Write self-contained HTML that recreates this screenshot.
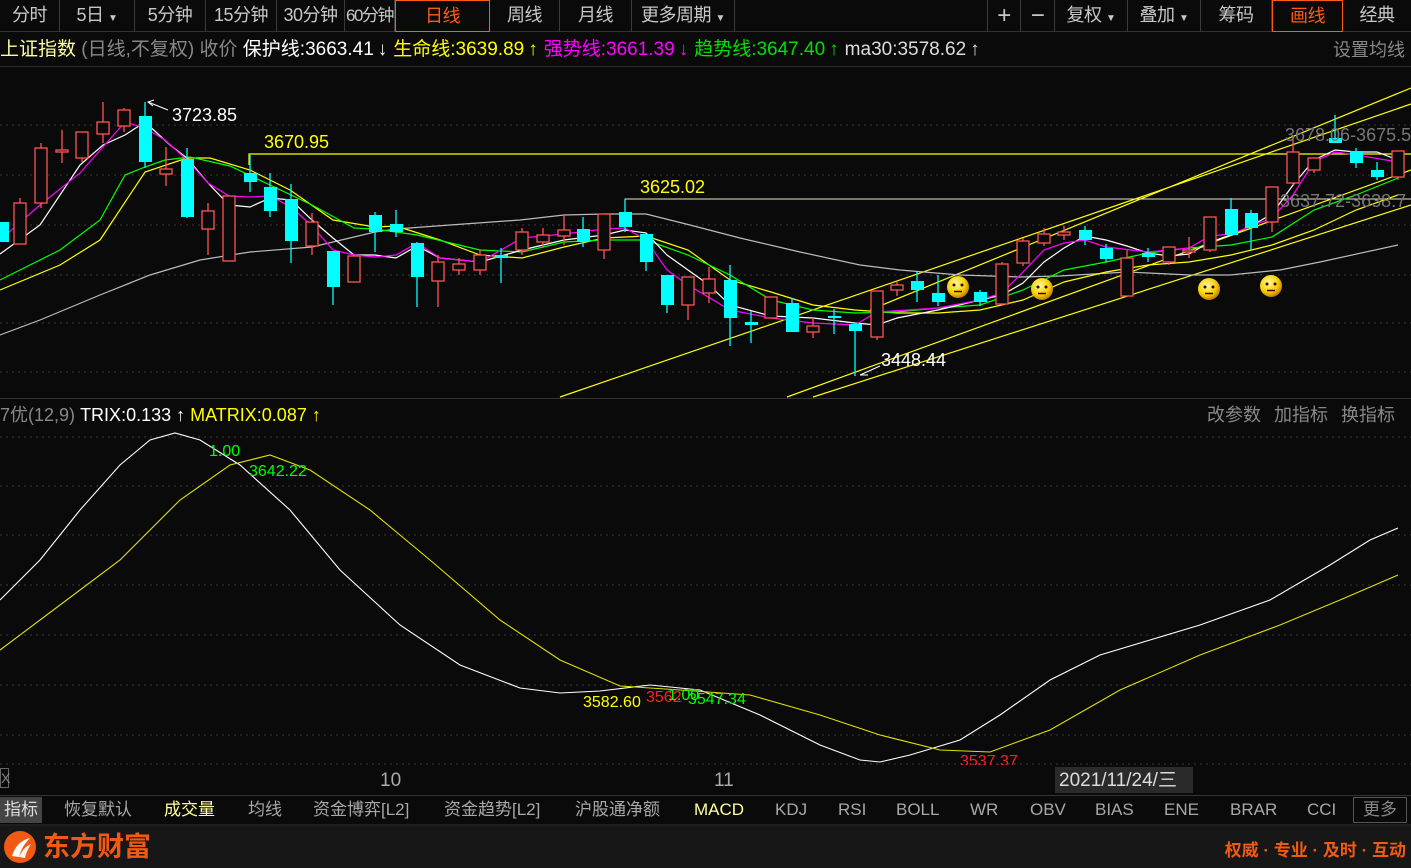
<!DOCTYPE html>
<html><head><meta charset="utf-8"><style>
*{margin:0;padding:0;box-sizing:border-box}
body{width:1411px;height:868px;background:#0a0a0a;overflow:hidden;font-family:"Liberation Sans","Noto Sans CJK SC",sans-serif;color:#aaa;position:relative}
.top{position:absolute;top:0;left:0;width:1411px;height:32px;border-bottom:1px solid #333}
.tb{position:absolute;top:0;height:32px;line-height:31px;font-size:18px;color:#c8c8c8;text-align:center;border-right:1px solid #3a3a3a;white-space:nowrap;overflow:hidden;letter-spacing:-0.5px}
.tb.on{color:#ff5a14;border:1px solid #ff5a14}
.info{position:absolute;top:33px;left:0;width:1411px;height:34px;line-height:34px;font-size:19px;white-space:nowrap;border-bottom:1px solid #2a2a2a}
.info i{font-style:normal;margin:0 6px 0 4px}
.tabs{position:absolute;top:795px;left:0;width:1411px;height:29px;border-top:1px solid #333;line-height:28px;font-size:17px}
.tabs span{position:absolute;top:0;color:#a8a8a8}
.foot{position:absolute;top:826px;left:0;width:1411px;height:42px;background:#171717}
</style></head><body>
<div class="top">
<div class="tb" style="left:0;width:60px">分时</div>
<div class="tb" style="left:60px;width:75px">5日 <span style="font-size:10px">▼</span></div>
<div class="tb" style="left:135px;width:71px">5分钟</div>
<div class="tb" style="left:206px;width:71px">15分钟</div>
<div class="tb" style="left:277px;width:68px">30分钟</div>
<div class="tb" style="left:345px;width:50px;letter-spacing:-1.5px;font-size:17px">60分钟</div>
<div class="tb on" style="left:395px;width:95px">日线</div>
<div class="tb" style="left:490px;width:70px">周线</div>
<div class="tb" style="left:560px;width:72px">月线</div>
<div class="tb" style="left:632px;width:103px">更多周期 <span style="font-size:10px">▼</span></div>
<div class="tb" style="left:987px;width:34px;border-left:1px solid #3a3a3a;font-size:24px">+</div>
<div class="tb" style="left:1021px;width:34px;font-size:24px">−</div>
<div class="tb" style="left:1055px;width:73px">复权 <span style="font-size:10px">▼</span></div>
<div class="tb" style="left:1128px;width:73px">叠加 <span style="font-size:10px">▼</span></div>
<div class="tb" style="left:1201px;width:71px">筹码</div>
<div class="tb on" style="left:1272px;width:71px">画线</div>
<div class="tb" style="left:1343px;width:68px;border-right:none">经典</div>
</div>
<div class="info"><span style="color:#ffffa0">上证指数</span> <span style="color:#888">(日线,不复权) 收价</span> <span style="color:#fff">保护线:3663.41<i>↓</i></span><span style="color:#ffff00">生命线:3639.89<i>↑</i></span><span style="color:#ff00ff">强势线:3661.39<i>↓</i></span><span style="color:#00e000">趋势线:3647.40<i>↑</i></span><span style="color:#ddd">ma30:3578.62<i>↑</i></span><span style="position:absolute;right:6px;color:#888;font-size:18px">设置均线</span></div>

<svg style="position:absolute;left:0;top:0" width="1411" height="868">
<g stroke="#3a3a3a" stroke-dasharray="2,4" stroke-width="1">
<line x1="0" y1="125" x2="1411" y2="125"/><line x1="0" y1="175" x2="1411" y2="175"/><line x1="0" y1="225" x2="1411" y2="225"/><line x1="0" y1="275" x2="1411" y2="275"/><line x1="0" y1="323" x2="1411" y2="323"/><line x1="0" y1="372" x2="1411" y2="372"/>
<line x1="0" y1="437" x2="1411" y2="437"/><line x1="0" y1="486" x2="1411" y2="486"/><line x1="0" y1="535" x2="1411" y2="535"/><line x1="0" y1="585" x2="1411" y2="585"/><line x1="0" y1="635" x2="1411" y2="635"/><line x1="0" y1="685" x2="1411" y2="685"/><line x1="0" y1="735" x2="1411" y2="735"/><line x1="0" y1="764" x2="1411" y2="764"/>
</g>
<line x1="0" y1="398.5" x2="1411" y2="398.5" stroke="#333"/>
<line x1="0" y1="793.5" x2="1411" y2="793.5" stroke="#333"/>
<g stroke="#ffff00" stroke-width="1.2" fill="none">
<line x1="560" y1="397" x2="1411" y2="104"/>
<line x1="870" y1="310" x2="1411" y2="88"/>
<line x1="787" y1="397" x2="1411" y2="170"/>
<line x1="813" y1="397" x2="1411" y2="205"/>
<polyline points="249,165 249,154 1411,154"/>
</g>
<polyline points="625,212 625,199 1411,199" stroke="#e8e8c0" fill="none"/>
<polyline fill="none" stroke="#bbb" stroke-width="1.2" points="0,335 40,320 100,295 150,275 200,260 250,252 312,247 375,232 396,229 450,225 520,220 564,215 604,214 646,214 690,225 740,238 800,252 860,265 900,270 960,275 1020,277 1060,276 1127,272 1190,275 1230,275 1280,270 1320,262 1398,245"/>
<polyline fill="none" stroke="#ffff00" stroke-width="1.2" points="0,290 60,265 100,240 145,172 187,158 210,158 250,170 290,190 333,220 375,227 396,226 440,240 480,255 522,258 564,247 604,238 646,236 688,250 730,280 771,292 813,305 855,310 897,313 938,313 980,310 1023,300 1064,282 1106,272 1148,265 1189,262 1231,255 1272,245 1314,230 1356,210 1398,195"/>
<polyline fill="none" stroke="#00ff00" stroke-width="1.2" points="0,280 60,250 100,220 125,175 145,167 165,160 190,157 230,166 270,185 312,205 354,228 375,229 417,235 480,250 522,252 564,242 604,240 646,240 688,255 730,275 771,300 813,310 855,313 897,312 938,308 980,305 1023,290 1064,270 1106,262 1148,253 1189,248 1231,245 1272,237 1314,210 1356,195 1398,178"/>
<polyline fill="none" stroke="#fff" stroke-width="1.2" points="0,254 40,225 80,165 103,145 125,135 145,122 170,145 187,158 208,183 229,205 250,207 270,198 291,200 312,220 333,238 354,255 375,255 396,258 417,246 440,258 480,262 522,250 564,240 604,235 625,230 646,233 667,255 688,270 709,285 730,305 771,316 813,318 855,323 877,325 897,318 938,310 980,300 1002,295 1023,283 1044,262 1064,248 1085,236 1106,240 1127,246 1148,253 1169,256 1189,254 1210,242 1231,235 1251,226 1272,214 1293,185 1314,160 1335,150 1356,152 1377,152 1398,160"/>
<polyline fill="none" stroke="#ff00ff" stroke-width="1.2" points="0,240 40,205 80,173 103,147 125,122 145,128 165,140 187,160 208,183 229,196 250,197 270,196 291,207 312,226 333,250 354,255 375,257 396,255 417,243 440,258 480,262 522,238 564,234 604,229 625,228 646,240 667,270 688,285 730,310 771,318 813,323 855,325 877,312 938,308 980,300 1002,293 1023,272 1044,250 1064,243 1085,240 1106,247 1148,252 1189,248 1210,236 1231,234 1272,218 1293,195 1314,162 1335,152 1356,155 1398,162"/>
<g stroke-width="1.3">
<line x1="3" y1="222" x2="3" y2="242" stroke="#0ff"/><rect x="-3" y="222" width="12" height="20" fill="#0ff"/>
<line x1="20" y1="198" x2="20" y2="244" stroke="#f55"/><rect x="14" y="203" width="12" height="41" fill="#0a0a0a" stroke="#f55"/>
<line x1="41" y1="143" x2="41" y2="208" stroke="#f55"/><rect x="35" y="148" width="12" height="55" fill="#0a0a0a" stroke="#f55"/>
<line x1="62" y1="130" x2="62" y2="163" stroke="#f55"/><rect x="56" y="150" width="12" height="2" fill="#0a0a0a" stroke="#f55"/>
<line x1="82" y1="132" x2="82" y2="162" stroke="#f55"/><rect x="76" y="132" width="12" height="26" fill="#0a0a0a" stroke="#f55"/>
<line x1="103" y1="102" x2="103" y2="143" stroke="#f55"/><rect x="97" y="122" width="12" height="12" fill="#0a0a0a" stroke="#f55"/>
<line x1="124" y1="108" x2="124" y2="132" stroke="#f55"/><rect x="118" y="110" width="12" height="16" fill="#0a0a0a" stroke="#f55"/>
<line x1="145" y1="102" x2="145" y2="168" stroke="#0ff"/><rect x="139" y="116" width="13" height="46" fill="#0ff"/>
<line x1="166" y1="147" x2="166" y2="186" stroke="#f55"/><rect x="160" y="169" width="12" height="5" fill="#0a0a0a" stroke="#f55"/>
<line x1="187" y1="148" x2="187" y2="218" stroke="#0ff"/><rect x="181" y="159" width="13" height="58" fill="#0ff"/>
<line x1="208" y1="203" x2="208" y2="255" stroke="#f55"/><rect x="202" y="211" width="12" height="18" fill="#0a0a0a" stroke="#f55"/>
<line x1="229" y1="196" x2="229" y2="261" stroke="#f55"/><rect x="223" y="196" width="12" height="65" fill="#0a0a0a" stroke="#f55"/>
<line x1="250" y1="155" x2="250" y2="192" stroke="#0ff"/><rect x="244" y="173" width="13" height="9" fill="#0ff"/>
<line x1="270" y1="173" x2="270" y2="217" stroke="#0ff"/><rect x="264" y="187" width="13" height="24" fill="#0ff"/>
<line x1="291" y1="184" x2="291" y2="263" stroke="#0ff"/><rect x="285" y="199" width="13" height="42" fill="#0ff"/>
<line x1="312" y1="213" x2="312" y2="255" stroke="#f55"/><rect x="306" y="222" width="12" height="24" fill="#0a0a0a" stroke="#f55"/>
<line x1="333" y1="251" x2="333" y2="305" stroke="#0ff"/><rect x="327" y="251" width="13" height="36" fill="#0ff"/>
<line x1="354" y1="256" x2="354" y2="282" stroke="#f55"/><rect x="348" y="256" width="12" height="26" fill="#0a0a0a" stroke="#f55"/>
<line x1="375" y1="212" x2="375" y2="252" stroke="#0ff"/><rect x="369" y="215" width="13" height="17" fill="#0ff"/>
<line x1="396" y1="210" x2="396" y2="237" stroke="#0ff"/><rect x="390" y="224" width="13" height="8" fill="#0ff"/>
<line x1="417" y1="242" x2="417" y2="307" stroke="#0ff"/><rect x="411" y="243" width="13" height="34" fill="#0ff"/>
<line x1="438" y1="255" x2="438" y2="307" stroke="#f55"/><rect x="432" y="262" width="12" height="19" fill="#0a0a0a" stroke="#f55"/>
<line x1="459" y1="258" x2="459" y2="275" stroke="#f55"/><rect x="453" y="264" width="12" height="6" fill="#0a0a0a" stroke="#f55"/>
<line x1="480" y1="250" x2="480" y2="275" stroke="#f55"/><rect x="474" y="255" width="12" height="15" fill="#0a0a0a" stroke="#f55"/>
<line x1="501" y1="248" x2="501" y2="283" stroke="#0ff"/><rect x="495" y="255" width="13" height="3" fill="#0ff"/>
<line x1="522" y1="228" x2="522" y2="255" stroke="#f55"/><rect x="516" y="232" width="12" height="18" fill="#0a0a0a" stroke="#f55"/>
<line x1="543" y1="228" x2="543" y2="248" stroke="#f55"/><rect x="537" y="235" width="12" height="7" fill="#0a0a0a" stroke="#f55"/>
<line x1="564" y1="215" x2="564" y2="245" stroke="#f55"/><rect x="558" y="230" width="12" height="6" fill="#0a0a0a" stroke="#f55"/>
<line x1="583" y1="217" x2="583" y2="247" stroke="#0ff"/><rect x="577" y="229" width="13" height="13" fill="#0ff"/>
<line x1="604" y1="214" x2="604" y2="259" stroke="#f55"/><rect x="598" y="214" width="12" height="36" fill="#0a0a0a" stroke="#f55"/>
<line x1="625" y1="199" x2="625" y2="232" stroke="#0ff"/><rect x="619" y="212" width="13" height="15" fill="#0ff"/>
<line x1="646" y1="234" x2="646" y2="271" stroke="#0ff"/><rect x="640" y="234" width="13" height="28" fill="#0ff"/>
<line x1="667" y1="275" x2="667" y2="313" stroke="#0ff"/><rect x="661" y="275" width="13" height="30" fill="#0ff"/>
<line x1="688" y1="277" x2="688" y2="320" stroke="#f55"/><rect x="682" y="277" width="12" height="28" fill="#0a0a0a" stroke="#f55"/>
<line x1="709" y1="267" x2="709" y2="303" stroke="#f55"/><rect x="703" y="279" width="12" height="14" fill="#0a0a0a" stroke="#f55"/>
<line x1="730" y1="265" x2="730" y2="346" stroke="#0ff"/><rect x="724" y="280" width="13" height="38" fill="#0ff"/>
<line x1="751" y1="311" x2="751" y2="343" stroke="#0ff"/><rect x="745" y="322" width="13" height="3" fill="#0ff"/>
<line x1="771" y1="297" x2="771" y2="318" stroke="#f55"/><rect x="765" y="297" width="12" height="21" fill="#0a0a0a" stroke="#f55"/>
<line x1="792" y1="298" x2="792" y2="332" stroke="#0ff"/><rect x="786" y="303" width="13" height="29" fill="#0ff"/>
<line x1="813" y1="317" x2="813" y2="338" stroke="#f55"/><rect x="807" y="326" width="12" height="6" fill="#0a0a0a" stroke="#f55"/>
<line x1="834" y1="309" x2="834" y2="334" stroke="#0ff"/><rect x="828" y="316" width="13" height="2" fill="#0ff"/>
<line x1="855" y1="324" x2="855" y2="376" stroke="#0ff"/><rect x="849" y="324" width="13" height="7" fill="#0ff"/>
<line x1="877" y1="291" x2="877" y2="340" stroke="#f55"/><rect x="871" y="291" width="12" height="46" fill="#0a0a0a" stroke="#f55"/>
<line x1="897" y1="282" x2="897" y2="296" stroke="#f55"/><rect x="891" y="285" width="12" height="5" fill="#0a0a0a" stroke="#f55"/>
<line x1="917" y1="272" x2="917" y2="302" stroke="#0ff"/><rect x="911" y="281" width="13" height="9" fill="#0ff"/>
<line x1="938" y1="275" x2="938" y2="306" stroke="#0ff"/><rect x="932" y="293" width="13" height="9" fill="#0ff"/>
<line x1="980" y1="290" x2="980" y2="306" stroke="#0ff"/><rect x="974" y="292" width="13" height="10" fill="#0ff"/>
<line x1="1002" y1="262" x2="1002" y2="306" stroke="#f55"/><rect x="996" y="264" width="12" height="40" fill="#0a0a0a" stroke="#f55"/>
<line x1="1023" y1="238" x2="1023" y2="266" stroke="#f55"/><rect x="1017" y="241" width="12" height="22" fill="#0a0a0a" stroke="#f55"/>
<line x1="1044" y1="228" x2="1044" y2="246" stroke="#f55"/><rect x="1038" y="234" width="12" height="9" fill="#0a0a0a" stroke="#f55"/>
<line x1="1064" y1="226" x2="1064" y2="240" stroke="#f55"/><rect x="1058" y="232" width="12" height="3" fill="#0a0a0a" stroke="#f55"/>
<line x1="1085" y1="226" x2="1085" y2="245" stroke="#0ff"/><rect x="1079" y="230" width="13" height="10" fill="#0ff"/>
<line x1="1106" y1="244" x2="1106" y2="262" stroke="#0ff"/><rect x="1100" y="248" width="13" height="11" fill="#0ff"/>
<line x1="1127" y1="250" x2="1127" y2="296" stroke="#f55"/><rect x="1121" y="258" width="12" height="38" fill="#0a0a0a" stroke="#f55"/>
<line x1="1148" y1="248" x2="1148" y2="262" stroke="#0ff"/><rect x="1142" y="253" width="13" height="4" fill="#0ff"/>
<line x1="1169" y1="247" x2="1169" y2="265" stroke="#f55"/><rect x="1163" y="247" width="12" height="15" fill="#0a0a0a" stroke="#f55"/>
<line x1="1189" y1="237" x2="1189" y2="258" stroke="#f55"/><rect x="1183" y="250" width="12" height="2" fill="#0a0a0a" stroke="#f55"/>
<line x1="1210" y1="217" x2="1210" y2="252" stroke="#f55"/><rect x="1204" y="217" width="12" height="33" fill="#0a0a0a" stroke="#f55"/>
<line x1="1231" y1="198" x2="1231" y2="235" stroke="#0ff"/><rect x="1225" y="209" width="13" height="26" fill="#0ff"/>
<line x1="1251" y1="210" x2="1251" y2="250" stroke="#0ff"/><rect x="1245" y="213" width="13" height="15" fill="#0ff"/>
<line x1="1272" y1="187" x2="1272" y2="232" stroke="#f55"/><rect x="1266" y="187" width="12" height="35" fill="#0a0a0a" stroke="#f55"/>
<line x1="1293" y1="140" x2="1293" y2="185" stroke="#f55"/><rect x="1287" y="152" width="12" height="31" fill="#0a0a0a" stroke="#f55"/>
<line x1="1314" y1="158" x2="1314" y2="173" stroke="#f55"/><rect x="1308" y="158" width="12" height="12" fill="#0a0a0a" stroke="#f55"/>
<line x1="1335" y1="115" x2="1335" y2="143" stroke="#0ff"/><rect x="1329" y="138" width="13" height="5" fill="#0ff"/>
<line x1="1356" y1="148" x2="1356" y2="168" stroke="#0ff"/><rect x="1350" y="151" width="13" height="12" fill="#0ff"/>
<line x1="1377" y1="162" x2="1377" y2="180" stroke="#0ff"/><rect x="1371" y="170" width="13" height="7" fill="#0ff"/>
<line x1="1398" y1="151" x2="1398" y2="180" stroke="#f55"/><rect x="1392" y="151" width="12" height="26" fill="#0a0a0a" stroke="#f55"/>
</g>
<defs><radialGradient id="sg" cx="0.4" cy="0.35" r="0.7"><stop offset="0" stop-color="#fff8a0"/><stop offset="0.6" stop-color="#f5d000"/><stop offset="1" stop-color="#c07000"/></radialGradient>
<g id="sm"><circle r="11" fill="url(#sg)"/><circle cx="-4" cy="-2" r="1.5" fill="#400"/><circle cx="4" cy="-2" r="1.5" fill="#400"/><line x1="-4" y1="4.5" x2="4" y2="4.5" stroke="#400" stroke-width="1.5"/></g></defs>
<use href="#sm" x="958" y="287"/><use href="#sm" x="1042" y="289"/><use href="#sm" x="1209" y="289"/><use href="#sm" x="1271" y="286"/>
<line x1="148" y1="102" x2="168" y2="110" stroke="#fff"/><polyline points="154,100 148,102 153,106" fill="none" stroke="#fff"/>
<line x1="860" y1="375" x2="880" y2="366" stroke="#fff"/><line x1="860" y1="375" x2="868" y2="375" stroke="#fff"/>
<g font-family="Liberation Sans,sans-serif" font-size="18">
<text x="172" y="121" fill="#fff">3723.85</text>
<text x="264" y="148" fill="#ffff00">3670.95</text>
<text x="640" y="193" fill="#ffff00">3625.02</text>
<text x="881" y="366" fill="#fff">3448.44</text>
<text x="1285" y="141" fill="#777">3678.06-3675.5</text>
<text x="1280" y="207" fill="#777">3637.72-3638.7</text>
</g>
<polyline fill="none" stroke="#fff" stroke-width="1.1" points="0,600 40,560 80,510 120,465 150,440 175,433 200,440 240,465 290,510 340,570 400,625 460,665 520,688 560,693 600,691 650,685 700,690 760,715 820,745 860,760 880,762 910,755 960,740 1000,715 1050,680 1100,655 1150,640 1200,625 1270,600 1330,565 1370,540 1398,528"/>
<polyline fill="none" stroke="#e0e000" stroke-width="1.1" points="0,650 60,605 120,560 180,500 230,465 270,455 310,470 370,510 430,560 500,620 560,660 620,686 680,690 750,695 820,715 880,735 940,750 990,752 1050,730 1120,690 1200,655 1280,625 1340,600 1398,575"/>
<g font-family="Liberation Sans,sans-serif" font-size="16">
<text x="209" y="456" fill="#00ff00">1.00</text>
<text x="249" y="476" fill="#00ff00">3642.22</text>
<text x="583" y="707" fill="#ffff00">3582.60</text>
<text x="646" y="702" fill="#ff2020">3562</text>
<text x="668" y="700" fill="#00ff00">1.00</text>
<text x="688" y="704" fill="#00ff00">3547.34</text>
<text x="960" y="766" fill="#ff2020">3537.37</text>
</g>
</svg>
<div style="position:absolute;top:400px;left:0;font-size:18px;line-height:30px;white-space:nowrap"><span style="color:#888">7优(12,9)</span> <span style="color:#fff">TRIX:0.133 ↑</span> <span style="color:#ffff00">MATRIX:0.087 ↑</span></div>
<div style="position:absolute;top:400px;right:16px;font-size:18px;line-height:30px;color:#888;word-spacing:8px">改参数 加指标 换指标</div>
<div style="position:absolute;top:765px;left:0;width:1411px;height:29px;background:#0a0a0a"></div>
<div style="position:absolute;top:768px;left:0;width:9px;height:20px;border:1px solid #666;color:#888;font-size:14px;line-height:18px">X</div>
<div style="position:absolute;top:770px;left:380px;font-size:19px;color:#aaa">10</div>
<div style="position:absolute;top:770px;left:714px;font-size:19px;color:#aaa">11</div>
<div style="position:absolute;top:767px;left:1055px;width:138px;height:26px;background:#2a2a2a;color:#ddd;font-size:19px;line-height:27px;padding-left:4px;overflow:hidden;white-space:nowrap">2021/11/24/三</div>
<div class="tabs">
<span style="left:0;background:#444;color:#ddd;padding:0 4px;top:1px;line-height:26px">指标</span>
<span style="left:64px">恢复默认</span><span style="left:164px;color:#ffffa0">成交量</span><span style="left:248px">均线</span><span style="left:313px">资金博弈[L2]</span><span style="left:444px">资金趋势[L2]</span><span style="left:575px">沪股通净额</span><span style="left:694px;color:#ffffa0">MACD</span><span style="left:775px">KDJ</span><span style="left:838px">RSI</span><span style="left:896px">BOLL</span><span style="left:970px">WR</span><span style="left:1030px">OBV</span><span style="left:1095px">BIAS</span><span style="left:1164px">ENE</span><span style="left:1230px">BRAR</span><span style="left:1307px">CCI</span>
<span style="left:1353px;top:1px;width:54px;height:26px;border:1px solid #555;text-align:center;line-height:24px;color:#888">更多</span>
</div>
<div style="position:absolute;top:824px;left:0;width:1411px;height:3px;background:#1e1e1e"></div>
<div style="position:absolute;top:826px;left:740px;width:67px;height:2px;background:#555"></div>
<div class="foot">
<svg style="position:absolute;left:3px;top:4px" width="34" height="34"><circle cx="17" cy="17" r="16" fill="#f05a14"/><path d="M9 26 C12 16 18 10 27 8 C22 13 18 19 16 27 Z" fill="#fff"/><path d="M16 27 C19 20 23 16 28 14 C25 19 23 23 22 28Z" fill="#fff" opacity=".9"/></svg>
<div style="position:absolute;left:43px;top:4px;font-size:27px;font-weight:bold;color:#f05a14;line-height:34px">东方财富</div>
<div style="position:absolute;right:5px;top:10px;font-size:17px;font-weight:bold;color:#f05a14">权威 · 专业 · 及时 · 互动</div>
</div>
</body></html>
